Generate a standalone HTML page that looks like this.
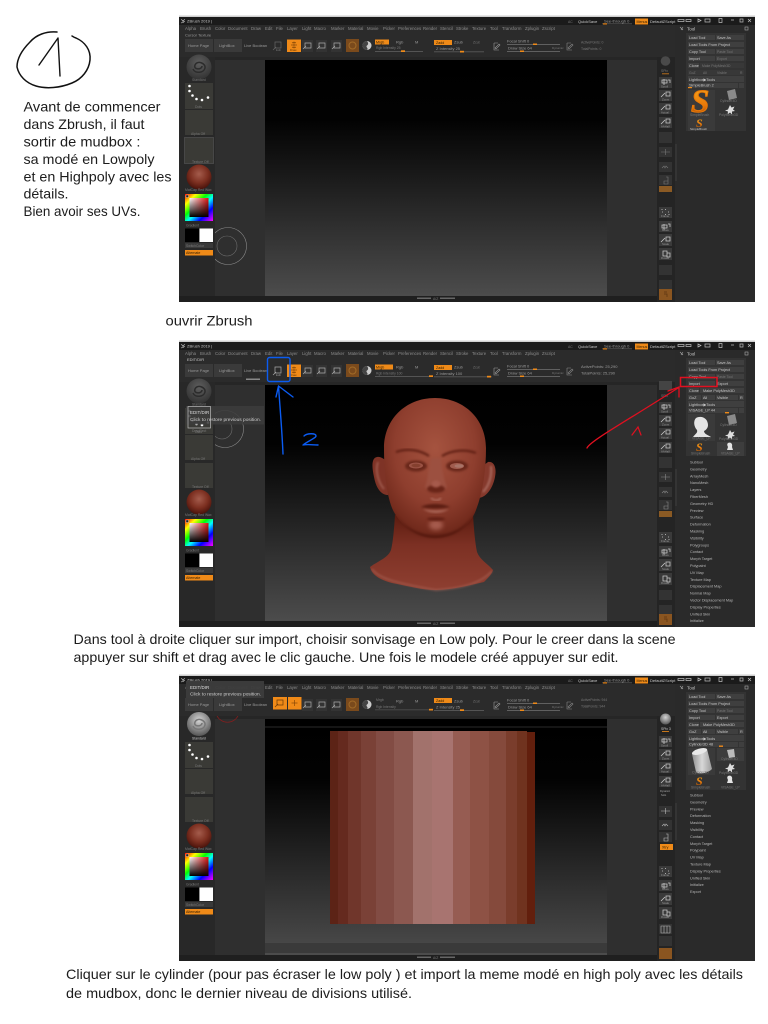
<!DOCTYPE html>
<html><head><meta charset="utf-8"><title>Zbrush</title>
<style>
html,body{margin:0;padding:0;background:#fff;width:768px;height:1024px;overflow:hidden}
svg{display:block;font-family:"Liberation Sans",sans-serif}
.b{font-size:14px;fill:#1c1c1c}
.t{font-size:4px;fill:#9a9a9a}
.m{font-size:4.300px;fill:#8c8c8c}
.d{font-size:3.400px;fill:#777}
.w{font-size:4px;fill:#c8c8c8}
.k{font-size:3.600px;fill:#2a1a00}
</style></head><body>
<svg width="768" height="1024" viewBox="0 0 768 1024" xmlns="http://www.w3.org/2000/svg">
<defs>
<linearGradient id="cv" x1="0" y1="0" x2="0" y2="1"><stop offset="0" stop-color="#000"/><stop offset=".25" stop-color="#020202"/><stop offset="1" stop-color="#4c4c4c"/></linearGradient>
<radialGradient id="gs" cx=".5" cy=".35" r=".65"><stop offset="0" stop-color="#5e5e5e"/><stop offset="1" stop-color="#333"/></radialGradient>
<radialGradient id="gb" cx=".5" cy=".35" r=".65"><stop offset="0" stop-color="#d5d5d5"/><stop offset="1" stop-color="#555"/></radialGradient>
<radialGradient id="ms" cx=".5" cy=".38" r=".6"><stop offset="0" stop-color="#a45c4c"/><stop offset=".6" stop-color="#7c2f20"/><stop offset="1" stop-color="#4c140c"/></radialGradient>
<radialGradient id="hd" cx=".5" cy=".36" r=".72"><stop offset="0" stop-color="#a5533f"/><stop offset=".55" stop-color="#8e3e2e"/><stop offset="1" stop-color="#621f12"/></radialGradient>
<linearGradient id="nk" x1="0" y1="0" x2="0" y2="1"><stop offset="0" stop-color="#5c1c10"/><stop offset=".4" stop-color="#7c3023"/><stop offset="1" stop-color="#8e3f31"/></linearGradient>
<linearGradient id="hue" x1="0" y1="0" x2="1" y2="1"><stop offset="0" stop-color="#f00"/><stop offset=".2" stop-color="#ff0"/><stop offset=".4" stop-color="#0f0"/><stop offset=".55" stop-color="#0ff"/><stop offset=".75" stop-color="#00f"/><stop offset="1" stop-color="#f0f"/></linearGradient>
<linearGradient id="sq1" x1="0" y1="0" x2="1" y2="0"><stop offset="0" stop-color="#fff"/><stop offset="1" stop-color="#e01010"/></linearGradient>
<linearGradient id="sq2" x1="0" y1="0" x2="0" y2="1"><stop offset="0" stop-color="#000" stop-opacity="0"/><stop offset="1" stop-color="#000"/></linearGradient>
<linearGradient id="sg" x1="0" y1="0" x2="0" y2="1"><stop offset="0" stop-color="#f8b020"/><stop offset=".6" stop-color="#e87808"/><stop offset="1" stop-color="#8a3a04"/></linearGradient>
<linearGradient id="cy" x1="0" y1="0" x2="1" y2="0"><stop offset="0" stop-color="#8f8f8f"/><stop offset=".5" stop-color="#d8d8d8"/><stop offset="1" stop-color="#9c9c9c"/></linearGradient>
<filter id="bl" x="-5%" y="-5%" width="110%" height="110%" color-interpolation-filters="sRGB"><feGaussianBlur stdDeviation=".38"/></filter>
<filter id="b1" x="-30%" y="-30%" width="160%" height="160%" color-interpolation-filters="sRGB"><feGaussianBlur stdDeviation="1"/></filter>
<filter id="b2" x="-30%" y="-30%" width="160%" height="160%" color-interpolation-filters="sRGB"><feGaussianBlur stdDeviation="2.200"/></filter>
<clipPath id="cl1"><rect x="215" y="60" width="50" height="236"/></clipPath>
<clipPath id="cl2"><rect x="215" y="385" width="50" height="236"/></clipPath>

<g id="chrome">
<rect x="179" y="15.500" width="576" height="1.500" fill="#cfcfcf"/>
<rect x="179" y="17" width="576" height="285" fill="#2a2a2a"/>
<rect x="179" y="17" width="576" height="8" fill="#1b1b1b"/>
<rect x="179" y="25" width="576" height="32" fill="#2b2b2b"/>
<rect x="179" y="57" width="36" height="245" fill="#282828"/>
<rect x="215" y="57" width="50" height="239" fill="#2f2f2f"/>
<rect x="607" y="60" width="50" height="236" fill="#2f2f2f"/>
<rect x="215" y="57" width="442" height="3" fill="#262626"/>
<rect x="657" y="57" width="18" height="245" fill="#242424"/>
<rect x="675" y="25" width="80" height="277" fill="#2a2a2a"/>
<rect x="179" y="296" width="478" height="6" fill="#1f1f1f"/>
<rect x="265" y="60" width="342" height="236" fill="url(#cv)"/>
<rect x="417" y="297.500" width="14" height="1.500" fill="#666"/><rect x="440" y="297.500" width="15" height="1.500" fill="#666"/><text x="433" y="300" class="d">A/Z</text>
<path d="M181 19.500l2 1 2-1M183 20v3M181 23l4-1.500" stroke="#ddd" stroke-width=".6" fill="none"/>
<text x="187" y="22.500" class="w">ZBrush 2019 |</text>
<g class="m">
<text x="185" y="30">Alpha</text><text x="200" y="30">Brush</text><text x="215" y="30">Color</text><text x="228" y="30">Document</text><text x="251" y="30">Draw</text><text x="265" y="30">Edit</text><text x="276" y="30">File</text><text x="287" y="30">Layer</text><text x="302" y="30">Light</text><text x="314" y="30">Macro</text><text x="331" y="30">Marker</text><text x="348" y="30">Material</text><text x="367" y="30">Movie</text><text x="383" y="30">Picker</text><text x="398" y="30">Preferences</text><text x="423" y="30">Render</text><text x="440" y="30">Stencil</text><text x="456" y="30">Stroke</text><text x="472" y="30">Texture</text><text x="490" y="30">Tool</text><text x="502" y="30">Transform</text><text x="525" y="30">Zplugin</text><text x="542" y="30">Zscript</text>
</g>
<text x="568" y="23" class="d">AC</text>
<text x="578" y="23" class="w">QuickSave</text>
<text x="604" y="22.500" class="t">See-through  0</text>
<rect x="602" y="23.500" width="30" height=".7" fill="#666"/><rect x="603" y="23.300" width="4" height="1.200" fill="#ef8a18"/>
<rect x="635" y="18.500" width="13" height="6" fill="#ef8a18"/><text x="636.500" y="23" class="k">Menus</text>
<text x="650" y="23" class="w">DefaultZScript</text>
<path d="M678 19.500h6v2h-6zM686 19.500h5v2h-5zM698 19l3 1.500-3 1.500zM705 19h5v3h-5zM719 18.500h3v4h-3zM731 20h3M740 19h3v3h-3zM748 19l3 3M751 19l-3 3" fill="none" stroke="#bbb" stroke-width=".7"/>

<rect x="185" y="39" width="28" height="13" fill="#3a3a3a"/><text x="188" y="47" class="t">Home Page</text>
<rect x="214" y="39" width="28" height="13" fill="#3a3a3a"/><text x="219" y="47" class="t">LightBox</text>
<text x="244" y="47" class="t">Live Boolean</text>

<rect x="302" y="40" width="11" height="12" fill="#333"/><path d="M305 43h6v5h-6zM303 49l3-3" fill="none" stroke="#aaa" stroke-width=".7"/>
<rect x="316" y="40" width="11" height="12" fill="#333"/><path d="M319 43h6v5h-6zM317 49l3-3" fill="none" stroke="#aaa" stroke-width=".7"/>
<rect x="331" y="40" width="11" height="12" fill="#333"/><path d="M334 43h6v5h-6zM332 49l3-3" fill="none" stroke="#aaa" stroke-width=".7"/>
<rect x="346" y="39" width="13" height="13" fill="#7a4a1c"/><circle cx="352.500" cy="45.500" r="3.500" fill="none" stroke="#a06a28" stroke-width="1"/>
<circle cx="367" cy="45.500" r="4.500" fill="#ccc"/><path d="M367 41a4.500 4.500 0 0 0 0 9c2-2-2-3 0-4.500s1-3 0-4.500z" fill="#444"/>

<text x="396" y="43.500" class="t">Rgb</text><text x="415" y="43.500" class="t">M</text>
<text x="454" y="43.500" class="t">Zsub</text><text x="473" y="43.500" class="d">Zcut</text>
<path d="M495 48l4-4 1 1-4 4zM494 43h4M494 43v7h5" fill="none" stroke="#999" stroke-width=".6"/>
<text x="507" y="42.500" class="t">Focal Shift 0</text>
<rect x="507" y="44" width="53" height=".7" fill="#777"/><rect x="533" y="43.500" width="4" height="1.500" fill="#ef8a18"/>
<text x="508" y="49.500" class="t">Draw Size 64</text>
<rect x="507" y="51" width="53" height=".7" fill="#777"/><rect x="520" y="50.500" width="4" height="1.500" fill="#ef8a18"/>
<text x="552" y="49" class="d" style="font-size:3px">Dynamic</text>
<path d="M568 48l4-4 1 1-4 4zM567 43h4M567 43v7h5" fill="none" stroke="#888" stroke-width=".6"/>

<rect x="185" y="83" width="28" height="26" fill="#3a3a36"/>
<circle cx="189.500" cy="86" r="1.300" fill="#fff"/><circle cx="189.500" cy="91" r="1.300" fill="#fff"/><circle cx="192.500" cy="95.500" r="1.300" fill="#fff"/><circle cx="196.500" cy="99" r="1.300" fill="#fff"/><circle cx="202" cy="100" r="1.300" fill="#fff"/><circle cx="208" cy="97.500" r="1.300" fill="#fff"/>
<text x="195" y="108" class="d">Dots</text>
<rect x="185" y="110" width="28" height="25" fill="#3a3a36"/><text x="191" y="135" class="d">Alpha Off</text>
<rect x="185" y="138" width="28" height="25" fill="#3a3a36"/><text x="192" y="163" class="d">Texture Off</text>
<circle cx="199" cy="177" r="12.500" fill="url(#ms)"/>
<text x="185" y="191" class="d">MatCap Red Wax</text>
<rect x="185" y="194" width="28" height="27" fill="url(#hue)"/>
<rect x="189.500" y="198" width="19" height="19" fill="url(#sq1)"/><rect x="189.500" y="198" width="19" height="19" fill="url(#sq2)"/>
<rect x="186" y="195" width="2.500" height="2.500" fill="#222" stroke="#fff" stroke-width=".3"/>
<text x="186" y="226.500" class="d">Gradient</text>
<rect x="185" y="228.500" width="14" height="13.500" fill="#000"/><rect x="199.500" y="228.500" width="13.500" height="13.500" fill="#fff"/>
<rect x="185" y="243" width="28" height="5" fill="#3a3a3a"/><text x="186" y="247" class="d">SwitchColor</text>
<rect x="185" y="250" width="28" height="5.500" fill="#ef8a18"/><text x="186" y="254" class="k">Alternate</text>

<g fill="#3a3a3a">
<rect x="659" y="77" width="13" height="11"/><rect x="659" y="90" width="13" height="11"/><rect x="659" y="103" width="13" height="11"/><rect x="659" y="117" width="13" height="11"/>
<rect x="659" y="207" width="13" height="11"/><rect x="659" y="221" width="13" height="11"/><rect x="659" y="234" width="13" height="12"/><rect x="659" y="248" width="13" height="12"/>
</g>
<g fill="none" stroke="#c8c8c8" stroke-width=".8">
<path d="M662 80h5v3h-5zM664 79v6M668 80h2v3"/><path d="M661 97l4-4M666 92h4v4h-4z"/><path d="M661 110l4-4M666 105h4v4h-4z"/><path d="M661 124l4-4M666 119h4v4h-4z"/>
<path d="M662 212h1M668 212h1M665.500 209v1M665.500 214v1M662 209v1M669 214v1"/><path d="M662 225h5v3h-5zM664 224v6M668 224h2v3"/><path d="M661 242l4-4M666 237h4v4h-4z"/><path d="M663 251h4v5h-4zM667 253h3v4h-3z"/>
</g>
<g style="font-size:2.800px;fill:#999"><text x="661" y="87.500">Scroll</text><text x="662" y="100.500">Zoom</text><text x="661" y="113.500">Actual</text><text x="661" y="127.500">AAHalf</text><text x="661" y="217">Frame</text><text x="662" y="231">Move</text><text x="662" y="245">Scale</text><text x="661" y="259">Rotate</text></g>
<rect x="675.500" y="144" width="1" height="37" fill="#3f3f3f"/>
<rect x="659" y="289" width="13" height="11" fill="#8a5520"/><path d="M664 292h3M664 294h3v3" stroke="#5a3410" stroke-width=".7" fill="none"/>

<text x="687" y="30.500" style="font-size:4.500px;fill:#ccc">Tool</text>
<path d="M680 27l3 3M681 30l2-3" stroke="#aaa" stroke-width=".6"/>
<rect x="745" y="27" width="3" height="3" fill="none" stroke="#aaa" stroke-width=".6"/>
</g>

<g id="headart">
<path d="M395 515C394 530 393 542 391 550C388 558 378 561 370 567C372 575 380 580 392 583C408 586 422 590 436 590C452 590 470 585 484 582C488 578 492 574 493 570C488 564 480 560 477 552C475 542 474 530 473 515Z" fill="url(#nk)"/>
<path d="M372 569C378 578 395 583 436 590C462 588 480 584 492 571" fill="none" stroke="#ab6457" stroke-width="1.400" filter="url(#b1)" opacity=".8"/>
<path d="M377 457C371 458 372 468 374 477C376 488 381 495 388 495L390 465C386 460 381 456 377 457Z" fill="#7e3326"/>
<path d="M378 462C375 470 378 482 384 489" fill="none" stroke="#a8665a" stroke-width="1.500" filter="url(#b1)"/>
<path d="M488 462C494 461 497 468 495 477C493 488 486 498 478 498L480 468Z" fill="#85392c"/>
<path d="M491 466C492 476 489 486 483 492" fill="none" stroke="#b0756a" stroke-width="1.700" filter="url(#b1)"/>
<path d="M435 398C405 398 384 420 384 448C384 470 386 492 392 508C399 524 415 538 435 538C455 538 470 526 476 510C483 492 486 470 486 448C486 420 465 398 435 398Z" fill="url(#hd)"/>
<path d="M392 508C399 524 415 538 435 538C455 538 470 526 476 510C466 530 448 535 435 535C420 535 402 528 392 508Z" fill="#56190f" filter="url(#b1)"/>
<path d="M396 452C408 448 420 450 429 456M442 456C452 450 466 449 476 453" fill="none" stroke="#5c1d12" stroke-width="2" filter="url(#b1)"/>
<ellipse cx="416" cy="466" rx="11" ry="5.500" fill="#6a281b" filter="url(#b1)"/>
<ellipse cx="457" cy="466" rx="11" ry="5.500" fill="#6a281b" filter="url(#b1)"/>
<ellipse cx="416" cy="465.500" rx="7" ry="3" fill="#9a5244"/><ellipse cx="416" cy="465.500" rx="4.500" ry="1.700" fill="#85402f"/>
<ellipse cx="457" cy="466" rx="7" ry="3" fill="#a05c4e"/><ellipse cx="459" cy="466" rx="4.500" ry="1.700" fill="#a87468"/>
<path d="M431 458C428 470 428 480 425 487C428 494 444 494 447 487C444 480 442 470 441 458Z" fill="#9c5040" filter="url(#b1)"/>
<ellipse cx="436" cy="489" rx="9" ry="4" fill="#6a2518" filter="url(#b1)"/>
<ellipse cx="436" cy="484" rx="4.500" ry="3.500" fill="#a65a4c" filter="url(#b1)"/>
<path d="M431 498C434 501 439 501 441 498" fill="none" stroke="#bd7f72" stroke-width="1.200" filter="url(#b1)"/>
<path d="M421 507C428 503 442 503 450 507C442 509 428 509 421 507Z" fill="#5a1d12" filter="url(#b1)"/>
<path d="M423 509C430 514 442 514 449 509C442 511 430 511 423 509Z" fill="#ad6a5c" filter="url(#b1)"/>
<ellipse cx="436" cy="525" rx="7" ry="5" fill="#a65c4e" filter="url(#b2)"/>
<ellipse cx="436" cy="519" rx="9" ry="1.800" fill="#611e13" filter="url(#b1)"/>
</g>
</defs>

<!-- handwritten 1 -->
<path d="M57 32C46 31 36 35 30 42C22 50 17 58 17 67C19 76 26 83 36 86C46 89 60 88 72 83C82 79 89 70 90 60C91 50 85 42 76 38C73 37 74 37 72 36" fill="none" stroke="#111" stroke-width="1.500" stroke-linecap="round"/>
<path d="M39 65L58 38L60 76" fill="none" stroke="#111" stroke-width="1.400" stroke-linecap="round" stroke-linejoin="round"/>

<g class="b">
<text x="23.500" y="111.500" textLength="137" lengthAdjust="spacingAndGlyphs">Avant de commencer</text>
<text x="23.500" y="129" textLength="121" lengthAdjust="spacingAndGlyphs">dans Zbrush, il faut</text>
<text x="23.500" y="146.500" textLength="117" lengthAdjust="spacingAndGlyphs">sortir de mudbox :</text>
<text x="23.500" y="164" textLength="131" lengthAdjust="spacingAndGlyphs">sa modé en Lowpoly</text>
<text x="23.500" y="181.500" textLength="148" lengthAdjust="spacingAndGlyphs">et en Highpoly avec les</text>
<text x="23.500" y="198.500" textLength="45" lengthAdjust="spacingAndGlyphs">détails.</text>
<text x="23.500" y="216" textLength="117" lengthAdjust="spacingAndGlyphs">Bien avoir ses UVs.</text>
<text x="165.500" y="325.500" textLength="87" lengthAdjust="spacingAndGlyphs">ouvrir Zbrush</text>
<text x="73.500" y="644" textLength="602" lengthAdjust="spacingAndGlyphs">Dans tool à droite cliquer sur import, choisir sonvisage en Low poly. Pour le creer dans la scene</text>
<text x="73.500" y="662" textLength="545" lengthAdjust="spacingAndGlyphs">appuyer sur shift et drag avec le clic gauche. Une fois le modele créé appuyer sur edit.</text>
<text x="66" y="979" textLength="677" lengthAdjust="spacingAndGlyphs">Cliquer sur le cylinder (pour pas écraser le low poly ) et import la meme modé en high poly avec les détails</text>
<text x="66" y="998" textLength="346" lengthAdjust="spacingAndGlyphs">de mudbox, donc le dernier niveau de divisions utilisé.</text>
</g>

<!-- SCREEN 1 -->
<g filter="url(#bl)">
<use href="#chrome"/>
<text x="185" y="36.500" class="t">Cursor Texture</text>
<path d="M275 42h6v6h-6zM273 50l3-3" fill="none" stroke="#666" stroke-width=".7"/><text x="276" y="51" style="font-size:2.800px;fill:#777">Edit</text>
<rect x="287" y="39.500" width="14" height="12.500" fill="#f08a18"/><path d="M294 42v6M291 45h6M292 43l2-1 2 1M292 47l2 1 2-1" stroke="#8a4a08" stroke-width=".7" fill="none"/><text x="290" y="51" style="font-size:2.800px;fill:#5a3000">Draw</text>
<circle cx="199" cy="67" r="12.500" fill="url(#gs)"/><path d="M193 69c2 5 11 4 12-1s-8-8-10-3 7 5 7 1" fill="none" stroke="#2c2c2c" stroke-width="1.500"/>
<text x="192" y="81" class="d">Standard</text>
<rect x="184.500" y="137.500" width="29" height="26" fill="none" stroke="#555" stroke-width=".7"/>
<g clip-path="url(#cl1)"><circle cx="228" cy="246" r="18.500" fill="none" stroke="#8a8a8a" stroke-width=".6"/><circle cx="227" cy="246" r="10" fill="none" stroke="#6e6e6e" stroke-width=".6"/></g>
<rect x="375" y="39.500" width="14" height="5" fill="#ef8a18"/><text x="376" y="43.500" class="k">Mrgb</text><text x="376" y="49" class="d">Rgb Intensity 25</text><rect x="375" y="51" width="48" height=".7" fill="#666"/><rect x="401" y="50.300" width="4" height="1.700" fill="#ef8a18"/>
<rect x="434" y="40" width="18" height="5" fill="#ef8a18"/><text x="436" y="44" class="k">Zadd</text><text x="436" y="50" class="t">Z Intensity 25</text><rect x="434" y="51.500" width="50" height=".7" fill="#666"/><rect x="460" y="50.800" width="4" height="1.700" fill="#ef8a18"/>
<text x="581" y="43.500" class="d">ActivePoints: 0</text><text x="581" y="50" class="d">TotalPoints: 0</text>
<circle cx="665.500" cy="61" r="4.800" fill="#4a4a4a"/><text x="661" y="72" class="d">SPix</text><rect x="662" y="73.500" width="7" height=".7" fill="#ef8a18"/>
<g fill="#333"><rect x="659" y="132" width="13" height="11"/><rect x="659" y="147" width="13" height="10"/><rect x="659" y="162" width="13" height="10"/><rect x="659" y="175" width="13" height="10"/><rect x="659" y="265" width="13" height="10"/><rect x="659" y="280" width="13" height="9"/></g>
<path d="M661 152h9M665.500 149v6M662 168l2-2 1 2 1-2 2 2M664 181h4v3h-4zM666 177h2v4" stroke="#777" stroke-width=".6" fill="none"/>
<rect x="659" y="186" width="13" height="6" fill="#8a5a24"/>
<rect x="686" y="33" width="60" height="98" fill="#333"/>
<g fill="#3f3f3f"><rect x="688" y="35" width="27" height="5"/><rect x="716" y="35" width="28" height="5"/><rect x="688" y="42" width="56" height="5"/><rect x="688" y="49" width="27" height="5"/><rect x="716" y="49" width="28" height="5"/><rect x="688" y="56" width="27" height="5"/><rect x="716" y="56" width="28" height="5"/><rect x="688" y="63" width="11" height="5"/><rect x="700" y="63" width="44" height="5" fill="#383838"/><rect x="688" y="70" width="56" height="5" fill="#383838"/><rect x="688" y="76" width="56" height="6"/><rect x="688" y="83" width="50" height="5"/><rect x="739" y="83" width="5" height="5"/></g>
<g class="w" style="font-size:3.800px"><text x="689" y="39">Load Tool</text><text x="717" y="39">Save As</text><text x="689" y="46">Load Tools From Project</text><text x="689" y="53">Copy Tool</text><text x="689" y="60">Import</text><text x="689" y="67">Clone</text><text x="689" y="81">Lightbox▶Tools</text><text x="689" y="86.500">SimpleBrush  2</text></g>
<g class="d"><text x="717" y="53">Paste Tool</text><text x="717" y="60">Export</text><text x="702" y="67">Make PolyMesh3D</text><text x="689" y="74">GoZ</text><text x="703" y="74">All</text><text x="717" y="74">Visible</text><text x="740" y="74">R</text></g>
<rect x="688" y="87" width="4" height="1.200" fill="#ef8a18"/>
<rect x="688" y="90" width="27" height="27" fill="#3a3a3a"/>
<text x="691" y="112" style="font-family:'Liberation Serif',serif;font-size:33px;font-weight:bold;font-style:italic;fill:url(#sg);stroke:#e87808;stroke-width:1px">S</text>
<text x="690" y="116" class="d">SimpleBrush</text>
<rect x="688" y="117" width="27" height="14" fill="#3a3a3a"/>
<text x="696" y="127" style="font-family:'Liberation Serif',serif;font-size:12px;font-weight:bold;font-style:italic;fill:url(#sg)">S</text>
<text x="690" y="130" class="w" style="font-size:3px">SimpleBrush</text>
<path d="M727 91l8-2 2 9-8 2z" fill="#8a8a8a"/><text x="720" y="102" class="d">Cylinder3D</text>
<path d="M730 105l1.500 2.500 3-1-1.500 3 2 1.500-3 .5 0 3-2-2-2.500 2 .5-3-3-1 3-1z" fill="#ddd"/><text x="719" y="116" class="d">PolyMesh3D</text>
</g>

<!-- SCREEN 2 -->
<g filter="url(#bl)">
<use href="#chrome" transform="translate(0,325)"/>
<text x="187" y="361" class="w">EDIT/DIR</text>
<path d="M275 367h6v6h-6zM273 375l3-3" fill="none" stroke="#aaa" stroke-width=".7"/><text x="276" y="376" style="font-size:2.800px;fill:#999">Edit</text>
<rect x="287" y="364.500" width="14" height="12.500" fill="#f08a18"/><path d="M294 367v6M291 370h6M292 368l2-1 2 1M292 372l2 1 2-1" stroke="#8a4a08" stroke-width=".7" fill="none"/><text x="290" y="376" style="font-size:2.800px;fill:#5a3000">Draw</text>
<rect x="246" y="378.500" width="14" height="1.500" fill="#888"/>
<circle cx="199" cy="391" r="12.500" fill="url(#gs)"/><path d="M193 393c2 5 11 4 12-1s-8-8-10-3 7 5 7 1" fill="none" stroke="#2c2c2c" stroke-width="1.500"/>
<text x="192" y="405.500" class="d">Standard</text>
<g clip-path="url(#cl2)"><circle cx="225" cy="429" r="18.500" fill="none" stroke="#8a8a8a" stroke-width=".6"/><circle cx="222" cy="429" r="10" fill="none" stroke="#6e6e6e" stroke-width=".6"/></g>
<rect x="186" y="406" width="78" height="18.500" fill="#3c3c3c" opacity=".88"/>
<rect x="188" y="406.500" width="22.500" height="21.500" fill="none" stroke="#bbb" stroke-width=".7"/>
<text x="190" y="414" style="font-size:4.500px;fill:#ddd">EDIT/DIR</text>
<text x="190" y="421" style="font-size:4.500px;fill:#ccc" textLength="71" lengthAdjust="spacingAndGlyphs">Click to restore previous position.</text>
<text x="192" y="432" class="d">DragRect</text>
<rect x="375" y="364.500" width="18" height="5" fill="#ef8a18"/><text x="376" y="368.500" class="k">Mrgb</text><text x="376" y="374.500" class="d">Rgb Intensity 100</text><rect x="375" y="376" width="58" height=".7" fill="#666"/><rect x="429" y="375.300" width="4" height="1.700" fill="#ef8a18"/>
<rect x="434" y="365" width="18" height="5" fill="#ef8a18"/><text x="436" y="369" class="k">Zadd</text><text x="436" y="375" class="t">Z Intensity 100</text><rect x="434" y="376.500" width="58" height=".7" fill="#666"/><rect x="487" y="375.800" width="4" height="1.700" fill="#ef8a18"/>
<text x="581" y="368" class="t">ActivePoints: 25,290</text><text x="581" y="374.500" class="t">TotalPoints: 25,290</text>
<rect x="659" y="381" width="13" height="9" fill="#444"/><text x="661" y="397" class="d">SPix</text>
<g fill="#333"><rect x="659" y="457" width="13" height="11"/><rect x="659" y="472" width="13" height="10"/><rect x="659" y="487" width="13" height="10"/><rect x="659" y="500" width="13" height="10"/><rect x="659" y="590" width="13" height="10"/><rect x="659" y="605" width="13" height="9"/></g>
<path d="M661 477h9M665.500 474v6M662 493l2-2 1 2 1-2 2 2M664 506h4v3h-4zM666 502h2v4" stroke="#888" stroke-width=".6" fill="none"/>
<rect x="659" y="511" width="13" height="6" fill="#8a5a24"/>
<rect x="686" y="358" width="60" height="98" fill="#333"/>
<g fill="#3f3f3f"><rect x="688" y="360" width="27" height="5"/><rect x="716" y="360" width="28" height="5"/><rect x="688" y="367" width="56" height="5"/><rect x="688" y="374" width="27" height="5"/><rect x="716" y="374" width="28" height="5"/><rect x="688" y="381" width="27" height="5"/><rect x="716" y="381" width="28" height="5"/><rect x="688" y="388" width="11" height="5"/><rect x="700" y="388" width="44" height="5"/><rect x="688" y="395" width="13" height="5"/><rect x="702" y="395" width="13" height="5"/><rect x="716" y="395" width="22" height="5"/><rect x="739" y="395" width="5" height="5"/><rect x="688" y="401" width="56" height="6"/><rect x="688" y="408" width="50" height="5"/><rect x="739" y="408" width="5" height="5"/></g>
<g class="w" style="font-size:3.800px"><text x="689" y="364">Load Tool</text><text x="717" y="364">Save As</text><text x="689" y="371">Load Tools From Project</text><text x="689" y="378">Copy Tool</text><text x="689" y="385">Import</text><text x="717" y="385">Export</text><text x="689" y="392">Clone</text><text x="703" y="392">Make PolyMesh3D</text><text x="689" y="399">GoZ</text><text x="703" y="399">All</text><text x="717" y="399">Visible</text><text x="740" y="399">R</text><text x="689" y="406">Lightbox▶Tools</text><text x="689" y="411.500">VISAGE_LP  44</text></g>
<text x="717" y="378" class="d">Paste Tool</text>
<rect x="725" y="412" width="4" height="1.400" fill="#ef8a18"/>
<rect x="688" y="414" width="27" height="27" fill="#3a3a3a"/>
<path d="M696 418C701 415 708 418 708 425C708 428 706 430 704 431C704 434 708 435 711 437L693 437C695 434 698 433 697 430C694 427 693 421 696 418Z" fill="#e4e4e4"/>
<text x="692" y="439.500" class="d">VISAGE_LP</text>
<path d="M727 416l8-2 2 9-8 2z" fill="#8a8a8a"/><text x="720" y="426" class="d">Cylinder3D</text>
<path d="M730 430l1.500 2.500 3-1-1.500 3 2 1.500-3 .5 0 3-2-2-2.500 2 .5-3-3-1 3-1z" fill="#ddd"/><text x="719" y="440" class="d">PolyMesh3D</text>
<rect x="688" y="441" width="27" height="15" fill="#333"/>
<text x="696" y="451" style="font-family:'Liberation Serif',serif;font-size:12px;font-weight:bold;font-style:italic;fill:url(#sg)">S</text>
<text x="691" y="454.500" class="d">SimpleBrush</text>
<rect x="717" y="442" width="27" height="14" fill="#3d3d3d"/>
<path d="M728 443c2-1 5 0 4 4l1 3h-6l1-3c-1-2-1-3 0-4z" fill="#e4e4e4"/>
<text x="721" y="454.500" class="d">VISAGE_LP</text>
<g class="w" style="font-size:3.800px;fill:#b8b8b8">
<text x="690" y="463.500">Subtool</text><text x="690" y="470.400">Geometry</text><text x="690" y="477.300">ArrayMesh</text><text x="690" y="484.200">NanoMesh</text><text x="690" y="491.100">Layers</text><text x="690" y="498">FiberMesh</text><text x="690" y="504.900">Geometry HD</text><text x="690" y="511.800">Preview</text><text x="690" y="518.700">Surface</text><text x="690" y="525.600">Deformation</text><text x="690" y="532.500">Masking</text><text x="690" y="539.400">Visibility</text><text x="690" y="546.300">Polygroups</text><text x="690" y="553.200">Contact</text><text x="690" y="560.100">Morph Target</text><text x="690" y="567">Polypaint</text><text x="690" y="573.900">UV Map</text><text x="690" y="580.800">Texture Map</text><text x="690" y="587.700">Displacement Map</text><text x="690" y="594.600">Normal Map</text><text x="690" y="601.500">Vector Displacement Map</text><text x="690" y="608.400">Display Properties</text><text x="690" y="615.300">Unified Skin</text><text x="690" y="622.200">Initialize</text></g>
<use href="#headart"/>
</g>
<!-- annotations -->
<rect x="267.500" y="357.500" width="22.500" height="24" rx="2" fill="none" stroke="#0b5cf2" stroke-width="1.400"/>
<path d="M283 454C282 430 280 408 278.500 386M276 397L278.500 386L293 397" fill="none" stroke="#0b5cf2" stroke-width="1.400" stroke-linecap="round" stroke-linejoin="round"/>
<path d="M304 436C307 433 316 433 316 436C316 438 308 441 303 445C308 444 313 445 318 445" fill="none" stroke="#0b5cf2" stroke-width="1.400" stroke-linecap="round" stroke-linejoin="round"/>
<rect x="680.500" y="377.500" width="36.500" height="9" fill="none" stroke="#e01020" stroke-width="1.500"/>
<path d="M587 448C590 441 625 422 678 388M679 397L679 387L668 391" fill="none" stroke="#e01020" stroke-width="1.300" stroke-linecap="round"/>
<path d="M632 435L638 427L641 435" fill="none" stroke="#e01020" stroke-width="1.200" stroke-linecap="round"/>

<!-- SCREEN 3 -->
<g filter="url(#bl)">
<use href="#chrome" transform="translate(0,659)"/>
<rect x="186" y="681" width="78" height="17" fill="#3c3c3c" opacity=".96"/>
<text x="190" y="689" style="font-size:4.500px;fill:#ddd">EDIT/DIR</text>
<text x="190" y="695.500" style="font-size:4.500px;fill:#ccc" textLength="71" lengthAdjust="spacingAndGlyphs">Click to restore previous position.</text>
<rect x="273" y="697" width="14" height="12.500" fill="#f08a18"/><path d="M277 700h6v5h-6zM275 707l3-3" fill="none" stroke="#6a3a08" stroke-width=".7"/>
<rect x="288" y="697" width="13.500" height="12.500" fill="#f08a18"/><path d="M294.500 700v6M291.500 703h6" stroke="#8a4a08" stroke-width=".7"/>
<circle cx="199" cy="724" r="12" fill="url(#gb)"/><path d="M193 726c2 5 11 4 12-1s-8-8-10-3 7 5 7 1" fill="none" stroke="#777" stroke-width="1.500"/>
<text x="192" y="739.500" class="w" style="font-size:3.400px">Standard</text>
<path d="M217 716a12 12 0 0 0 21 0" fill="none" stroke="#8c1c1c" stroke-width=".7"/>
<text x="376" y="701" class="d">Mrgb</text><text x="376" y="708" class="d">Rgb Intensity</text><rect x="375" y="709.500" width="58" height=".7" fill="#555"/><rect x="429" y="708.800" width="4" height="1.700" fill="#ef8a18"/>
<rect x="434" y="698" width="18" height="5" fill="#ef8a18"/><text x="436" y="702" class="k">Zadd</text><text x="436" y="708.500" class="t">Z Intensity 25</text><rect x="434" y="710" width="50" height=".7" fill="#666"/><rect x="460" y="709.300" width="4" height="1.700" fill="#ef8a18"/>
<text x="581" y="701" class="d">ActivePoints: 944</text><text x="581" y="707.500" class="d">TotalPoints: 944</text>
<rect x="265" y="726.500" width="342" height="1" fill="#2a2a2a"/>
<rect x="265" y="943" width="342" height="10" fill="#3a3a3a"/>
<g>
<rect x="330" y="731" width="8" height="193" fill="#5c2316"/><rect x="338" y="731" width="10" height="193" fill="#652a1f"/><rect x="348" y="731" width="13" height="193" fill="#70362b"/><rect x="361" y="731" width="15" height="193" fill="#7a4137"/><rect x="376" y="731" width="18" height="193" fill="#824c44"/><rect x="394" y="731" width="19" height="193" fill="#8c5850"/><rect x="413" y="731" width="19" height="193" fill="#a2726c"/><rect x="432" y="731" width="21" height="193" fill="#a87470"/><rect x="453" y="731" width="17" height="193" fill="#965c52"/><rect x="470" y="731" width="19" height="193" fill="#8e5245"/><rect x="489" y="731" width="17" height="193" fill="#854a3c"/><rect x="506" y="731" width="11" height="193" fill="#7a3d2c"/><rect x="517" y="731" width="10" height="193" fill="#70331f"/><rect x="527" y="732" width="8" height="192" fill="#621f0d"/>
</g>
<circle cx="665.500" cy="719" r="5.500" fill="url(#gb)"/><text x="661" y="730" class="w" style="font-size:3.400px">SPix 3</text><rect x="662" y="731" width="7" height=".8" fill="#ef8a18"/>
<text x="660" y="792" style="font-size:2.600px;fill:#aaa">Dynamic</text><text x="661" y="796" style="font-size:2.600px;fill:#aaa">Solo</text>
<g fill="#333"><rect x="659" y="806" width="13" height="11"/><rect x="659" y="820" width="13" height="10"/><rect x="659" y="832" width="13" height="10"/><rect x="659" y="924" width="13" height="10"/><rect x="659" y="936" width="13" height="10"/></g>
<path d="M661 811h9M665.500 808v6M662 826l2-2 1 2 1-2 2 2M664 838h4v3h-4zM666 834h2v4M661 926h9v7h-9zM664 926v7M667 926v7" stroke="#bbb" stroke-width=".6" fill="none"/>
<rect x="660" y="844" width="13" height="6" fill="#ef8a18"/><text x="662" y="848.500" class="k">Xtry</text>
<rect x="659" y="948" width="13" height="10" fill="#8a5520"/>
<rect x="686" y="692" width="60" height="98" fill="#333"/>
<g fill="#3f3f3f"><rect x="688" y="694" width="27" height="5"/><rect x="716" y="694" width="28" height="5"/><rect x="688" y="701" width="56" height="5"/><rect x="688" y="708" width="27" height="5"/><rect x="716" y="708" width="28" height="5"/><rect x="688" y="715" width="27" height="5"/><rect x="716" y="715" width="28" height="5"/><rect x="688" y="722" width="11" height="5"/><rect x="700" y="722" width="44" height="5"/><rect x="688" y="729" width="13" height="5"/><rect x="702" y="729" width="13" height="5"/><rect x="716" y="729" width="22" height="5"/><rect x="739" y="729" width="5" height="5"/><rect x="688" y="735" width="56" height="6"/><rect x="688" y="742" width="50" height="5"/><rect x="739" y="742" width="5" height="5"/></g>
<g class="w" style="font-size:3.800px"><text x="689" y="698">Load Tool</text><text x="717" y="698">Save As</text><text x="689" y="705">Load Tools From Project</text><text x="689" y="712">Copy Tool</text><text x="689" y="719">Import</text><text x="717" y="719">Export</text><text x="689" y="726">Clone</text><text x="703" y="726">Make PolyMesh3D</text><text x="689" y="733">GoZ</text><text x="703" y="733">All</text><text x="717" y="733">Visible</text><text x="740" y="733">R</text><text x="689" y="740">Lightbox▶Tools</text><text x="689" y="745.500">Cylinder3D  48</text></g>
<text x="717" y="712" class="d">Paste Tool</text>
<rect x="719" y="745.500" width="4" height="1.400" fill="#ef8a18"/>
<rect x="688" y="748" width="27" height="27" fill="#3a3a3a"/>
<path d="M692 754L707 749L712 769C708 773 699 775 696 772Z" fill="url(#cy)"/><ellipse cx="699.500" cy="751.500" rx="7.800" ry="2.800" transform="rotate(-16 699.500 751.500)" fill="#e8e8e8"/>
<text x="692" y="773.500" class="d">Cylinder3D</text>
<rect x="717" y="748" width="27" height="13" fill="#3d3d3d"/>
<path d="M727 750l7-1 1 8-6 1z" fill="#bbb"/><text x="721" y="760" class="d">Cylinder3D</text>
<path d="M730 763l1.500 2.500 3-1-1.500 3 2 1.500-3 .5 0 3-2-2-2.500 2 .5-3-3-1 3-1z" fill="#ddd"/><text x="719" y="774" class="d">PolyMesh3D</text>
<text x="696" y="785" style="font-family:'Liberation Serif',serif;font-size:12px;font-weight:bold;font-style:italic;fill:url(#sg)">S</text>
<text x="691" y="788.500" class="d">SimpleBrush</text>
<path d="M728 776c2-1 5 0 4 4l1 3h-6l1-3c-1-2-1-3 0-4z" fill="#e4e4e4"/>
<text x="721" y="788.500" class="d">VISAGE_LP</text>
<g class="w" style="font-size:3.800px;fill:#b8b8b8">
<text x="690" y="796.500">Subtool</text><text x="690" y="803.400">Geometry</text><text x="690" y="810.300">Preview</text><text x="690" y="817.200">Deformation</text><text x="690" y="824.100">Masking</text><text x="690" y="831">Visibility</text><text x="690" y="837.900">Contact</text><text x="690" y="844.800">Morph Target</text><text x="690" y="851.700">Polypaint</text><text x="690" y="858.600">UV Map</text><text x="690" y="865.500">Texture Map</text><text x="690" y="872.400">Display Properties</text><text x="690" y="879.300">Unified Skin</text><text x="690" y="886.200">Initialize</text><text x="690" y="893.100">Export</text></g>
</g>
</svg>
</body></html>
